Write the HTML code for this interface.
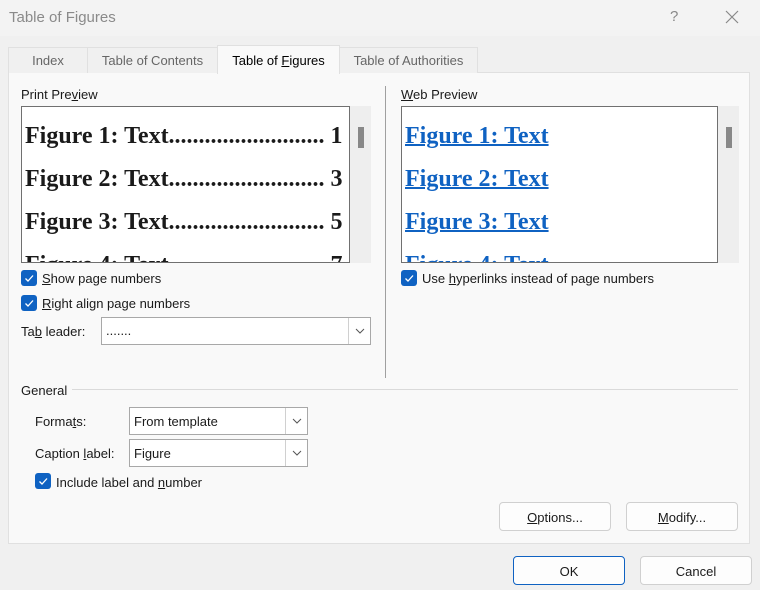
<!DOCTYPE html>
<html><head><style>
*{box-sizing:border-box;margin:0;padding:0}
body{width:760px;height:590px;background:#f0f0f0;font-family:"Liberation Sans",sans-serif;font-size:13px;color:#1a1a1a;position:relative;overflow:hidden}
.a{position:absolute}
.tab{position:absolute;top:47px;height:26px;border:1px solid #e0e0e0;border-bottom:none;background:#f0f0f0;color:#666;text-align:center;line-height:26px}
.cb{position:absolute;width:16px;height:16px;background:#0f62c2;border-radius:3px}
.cb svg{position:absolute;left:2px;top:2px}
.prev{position:absolute;background:#fff;border:1px solid #707070;overflow:hidden;font-family:"Liberation Serif",serif;font-weight:bold;font-size:24px}
.prev div{position:absolute;left:3px;white-space:nowrap}
.web div{color:#0f62c2;text-decoration:underline;text-decoration-thickness:2px}
.sb{position:absolute;background:#eeeeee}
.sb i{position:absolute;background:#888;width:6px;height:21px}
.combo{position:absolute;background:#fff;border:1px solid #a8a8a8;padding-left:4px}
.combo .dd{position:absolute;right:0;top:0;bottom:0;width:22px;border-left:1px solid #d0d0d0}
.btn{position:absolute;height:29px;background:#fdfdfd;border:1px solid #d0d0d0;border-radius:4px;text-align:center;line-height:29px}
u{text-decoration:underline}
</style></head><body>
<div class="a" style="left:0;top:0;width:760px;height:36px;background:#f3f3f3"></div>
<div class="a" style="left:9px;top:9px;font-size:15px;color:#8a8a8a">Table of Figures</div>
<div class="a" style="left:670px;top:8px;font-size:15px;color:#888">?</div>
<svg class="a" style="left:725px;top:10px" width="14" height="14"><path d="M1 1L13 13M13 1L1 13" stroke="#888" stroke-width="1.2"/></svg>

<div class="a" style="left:8px;top:72px;width:742px;height:472px;background:#f9f9f9;border:1px solid #e0e0e0"></div>
<div class="tab" style="left:8px;width:80px">Index</div>
<div class="tab" style="left:87px;width:131px">Table of Contents</div>
<div class="tab" style="left:339px;width:139px">Table of Authorities</div>
<div class="tab" style="left:217px;top:45px;height:29px;width:123px;background:#f9f9f9;color:#000;line-height:30px">Table of <u>F</u>igures</div>

<div class="a" style="left:21px;top:87px">Print Pre<u>v</u>iew</div>
<div class="prev" style="left:21px;top:106px;width:329px;height:157px">
<div style="top:16px">Figure 1: Text.......................... 1</div>
<div style="top:59px">Figure 2: Text.......................... 3</div>
<div style="top:102px">Figure 3: Text.......................... 5</div>
<div style="top:145px">Figure 4: Text.......................... 7</div>
</div>
<div class="sb" style="left:350px;top:106px;width:21px;height:157px"><i style="left:8px;top:21px"></i></div>

<div class="a" style="left:385px;top:86px;width:1px;height:292px;background:#a0a0a0"></div>

<div class="a" style="left:401px;top:87px"><u>W</u>eb Preview</div>
<div class="prev web" style="left:401px;top:106px;width:317px;height:157px">
<div style="top:16px">Figure 1: Text</div>
<div style="top:59px">Figure 2: Text</div>
<div style="top:102px">Figure 3: Text</div>
<div style="top:145px">Figure 4: Text</div>
</div>
<div class="sb" style="left:718px;top:106px;width:21px;height:157px"><i style="left:8px;top:21px"></i></div>

<div class="cb" style="left:21px;top:270px"><svg width="12" height="12"><path d="M2.5 6.5L5 9L10 3.5" stroke="#fff" stroke-width="1.3" fill="none"/></svg></div>
<div class="a" style="left:42px;top:271px"><u>S</u>how page numbers</div>
<div class="cb" style="left:21px;top:295px"><svg width="12" height="12"><path d="M2.5 6.5L5 9L10 3.5" stroke="#fff" stroke-width="1.3" fill="none"/></svg></div>
<div class="a" style="left:42px;top:296px"><u>R</u>ight align page numbers</div>
<div class="cb" style="left:401px;top:270px"><svg width="12" height="12"><path d="M2.5 6.5L5 9L10 3.5" stroke="#fff" stroke-width="1.3" fill="none"/></svg></div>
<div class="a" style="left:422px;top:271px">Use <u>h</u>yperlinks instead of page numbers</div>

<div class="a" style="left:21px;top:324px">Ta<u>b</u> leader:</div>
<div class="combo" style="left:101px;top:317px;width:270px;height:28px;line-height:26px">.......<div class="dd"><svg width="22" height="26"><path d="M7 11L11 15L15 11" stroke="#555" fill="none"/></svg></div></div>

<div class="a" style="left:21px;top:383px">General</div>
<div class="a" style="left:72px;top:389px;width:666px;height:1px;background:#dadada"></div>

<div class="a" style="left:35px;top:414px">Forma<u>t</u>s:</div>
<div class="combo" style="left:129px;top:407px;width:179px;height:28px;line-height:27px">From template<div class="dd"><svg width="22" height="26"><path d="M7 11L11 15L15 11" stroke="#555" fill="none"/></svg></div></div>
<div class="a" style="left:35px;top:446px">Caption <u>l</u>abel:</div>
<div class="combo" style="left:129px;top:439px;width:179px;height:28px;line-height:27px">Figure<div class="dd"><svg width="22" height="26"><path d="M7 11L11 15L15 11" stroke="#555" fill="none"/></svg></div></div>
<div class="cb" style="left:35px;top:473px"><svg width="12" height="12"><path d="M2.5 6.5L5 9L10 3.5" stroke="#fff" stroke-width="1.3" fill="none"/></svg></div>
<div class="a" style="left:56px;top:475px">Include label and <u>n</u>umber</div>

<div class="btn" style="left:499px;top:502px;width:112px"><u>O</u>ptions...</div>
<div class="btn" style="left:626px;top:502px;width:112px"><u>M</u>odify...</div>
<div class="btn" style="left:513px;top:556px;width:112px;border-color:#0f62c2">OK</div>
<div class="btn" style="left:640px;top:556px;width:112px">Cancel</div>
</body></html>
